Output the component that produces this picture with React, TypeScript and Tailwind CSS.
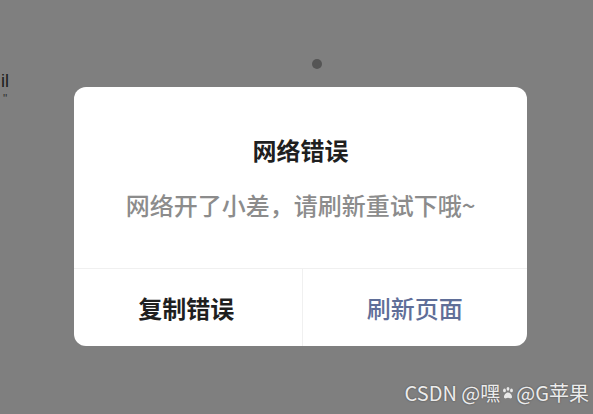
import React from "react";

const cjk = { fontFamily: '"Noto Sans CJK SC", "Noto Sans", sans-serif' };

function Paw() {
  return (
    <svg viewBox="0 0 16 16" className="h-[14px] w-[14px] fill-[#e8e8e8]">
      <ellipse cx="4" cy="5" rx="1.6" ry="2.1" />
      <ellipse cx="8" cy="3.2" rx="1.6" ry="2.1" />
      <ellipse cx="12" cy="5" rx="1.6" ry="2.1" />
      <path d="M8 7.5c-2.6 0-4.6 3.2-4.6 5 0 1.4 1.3 1.8 2.3 1.6 1-.2 1.5-.6 2.3-.6s1.3.4 2.3.6c1 .2 2.3-.2 2.3-1.6 0-1.8-2-5-4.6-5z" />
    </svg>
  );
}

function ErrorDialog() {
  return (
    <div className="w-[453px] overflow-hidden rounded-[12px] bg-white" style={cjk}>
      <div className="flex flex-col items-center px-6 pb-[47px] pt-[47px]">
        <h2 className="text-[24px] font-bold leading-[32px] text-[#1f1f1f]">网络错误</h2>
        <p className="mt-[23px] text-[24px] font-medium leading-[32px] text-[#8c8c8c]">
          网络开了小差，请刷新重试下哦~
        </p>
      </div>
      <div className="flex h-[78px] border-t border-[#f0f0f0]">
        <button className="flex flex-1 items-center justify-center pr-[3px] text-[24px] font-bold text-[#1f1f1f]">
          复制错误
        </button>
        <div className="w-px bg-[#f0f0f0]" />
        <button className="flex flex-1 items-center justify-center text-[24px] font-medium text-[#5f6e98]">
          刷新页面
        </button>
      </div>
    </div>
  );
}

export default function App() {
  return (
    <div className="relative h-[414px] w-[593px] overflow-hidden bg-[#7f7f7f]">
      {/* page behind the mask */}
      <div className="flex flex-col pl-px pt-[70px] text-[#1c1c1c]" style={{ fontFamily: '"Liberation Sans", sans-serif' }}>
        <span className="text-[18px] leading-[22px]">il</span>
        <span className="pl-[2px] text-[12px] leading-[14px] text-[#333]">"</span>
      </div>

      <div className="absolute left-[312px] top-[59px] h-[10px] w-[10px] rounded-full bg-[#555]" />

      {/* modal */}
      <div className="absolute inset-0 flex items-start pl-[74px] pt-[87px]">
        <ErrorDialog />
      </div>

      {/* watermark */}
      <div
        className="absolute right-[4px] top-[381px] flex items-center gap-[1px] text-[20px] leading-[24px] text-[#ececec] [text-shadow:0_0_2px_rgba(0,0,0,0.45)]"
        style={cjk}
      >
        <span>CSDN @嘿</span>
        <Paw />
        <span>@G苹果</span>
      </div>
    </div>
  );
}
